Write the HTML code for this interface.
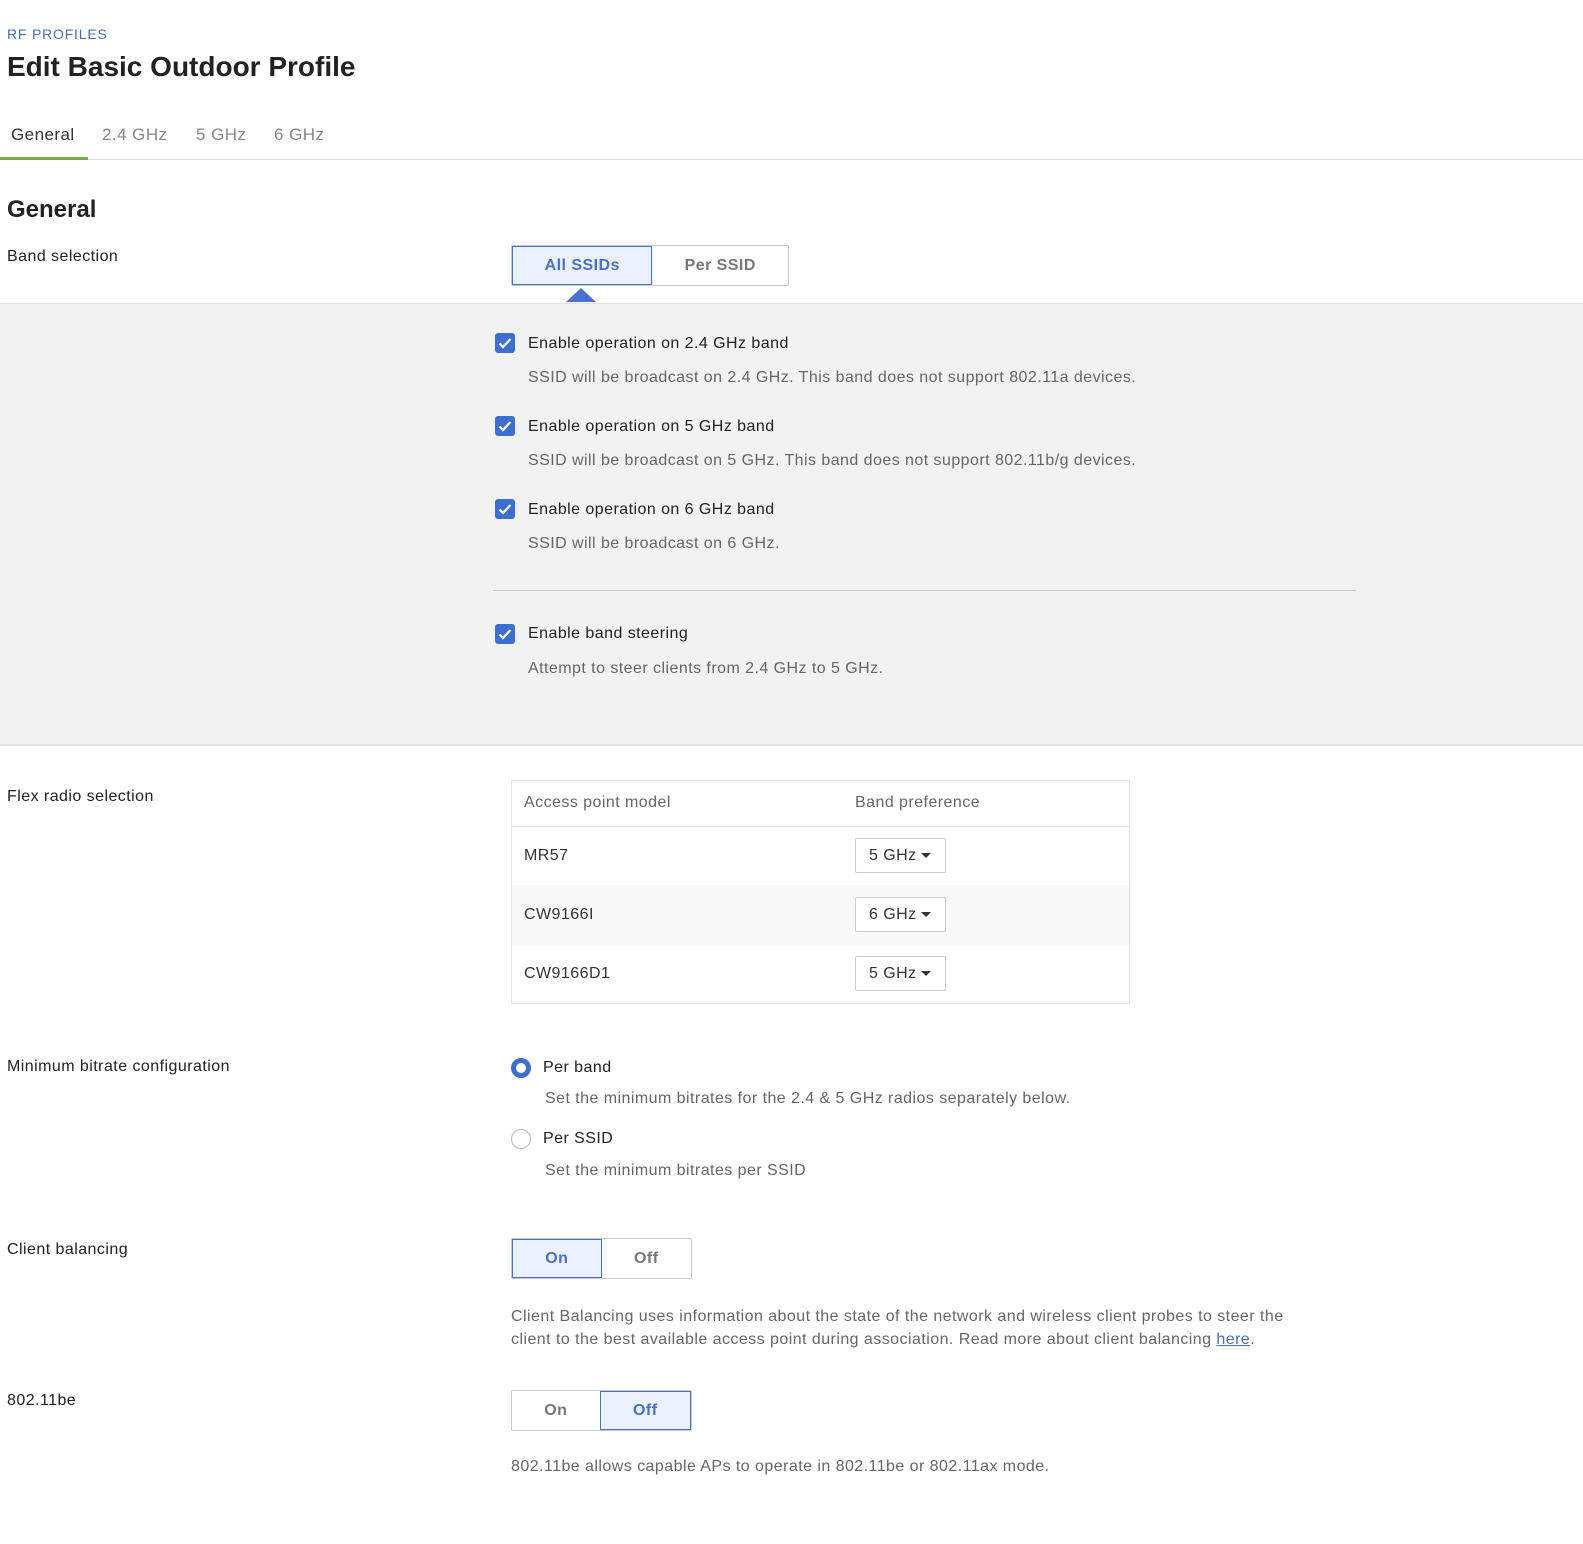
<!DOCTYPE html>
<html><head><meta charset="utf-8"><style>
*{margin:0;padding:0;box-sizing:border-box}
body{width:1583px;height:1544px;background:#fff;font-family:"Liberation Sans",sans-serif;color:#222;position:relative;overflow:hidden;font-size:16px;letter-spacing:.45px}
.a{position:absolute;white-space:nowrap;line-height:20px}
.g{color:#666}
.band{position:absolute;left:0;top:303px;width:1583px;height:443px;background:#f2f2f2;border-top:1px solid #e0e0e0;border-bottom:2px solid #e4e4e4}
.cb{position:absolute;width:20px;height:20px;background:#3c6fcf;border-radius:3px}
.cb svg{position:absolute;left:3px;top:4px}
.seg{position:absolute;display:flex;height:41px;border:1px solid #c8c8c8;border-radius:2px;font-weight:bold;color:#777}
.seg div{display:flex;align-items:center;justify-content:center}
.seg .on{background:#eaf1fd;color:#4a70c8;outline:1px solid #4a70c8;outline-offset:-1px}
.sel{position:absolute;left:855px;width:91px;height:35px;border:1px solid #ccc;border-radius:2px;background:#fff;padding-left:13px;line-height:33px;color:#333}
.sel:after{content:"";position:absolute;right:14px;top:14px;border:5px solid transparent;border-top:5px solid #333;border-bottom:0}
</style></head><body>
<div class="a" style="left:7px;top:24px;font-size:14px;color:#4a6fb0;letter-spacing:.8px">RF PROFILES</div>
<div class="a" style="left:7px;top:50px;font-size:28px;font-weight:bold;line-height:34px;letter-spacing:0">Edit Basic Outdoor Profile</div>
<div class="a" style="left:11px;top:125px;font-size:17px;color:#333">General</div>
<div class="a" style="left:102px;top:125px;font-size:17px;color:#888">2.4 GHz</div>
<div class="a" style="left:196px;top:125px;font-size:17px;color:#888">5 GHz</div>
<div class="a" style="left:274px;top:125px;font-size:17px;color:#888">6 GHz</div>
<div style="position:absolute;left:0;top:159px;width:1583px;height:1px;background:#ddd"></div>
<div style="position:absolute;left:0;top:157px;width:88px;height:3px;background:#78a84a"></div>
<div class="a" style="left:7px;top:196px;font-size:24px;font-weight:bold;line-height:28px;letter-spacing:0">General</div>
<div class="a" style="left:7px;top:247px">Band selection</div>
<div class="seg" style="left:511px;top:245px;width:278px"><div class="on" style="width:141px">All SSIDs</div><div style="width:136px">Per SSID</div></div>
<div class="band"></div>
<div style="position:absolute;left:566px;top:288px;border:15px solid transparent;border-bottom:14px solid #4a70d0;border-top:0"></div>

<div class="cb" style="left:495px;top:333px"><svg width="14" height="12"><path d="M1.5 6.5l3.5 3.5 7.5-8" stroke="#fff" stroke-width="2.2" fill="none"/></svg></div>
<div class="a" style="left:528px;top:334px">Enable operation on 2.4 GHz band</div>
<div class="a g" style="left:528px;top:368px">SSID will be broadcast on 2.4 GHz. This band does not support 802.11a devices.</div>
<div class="cb" style="left:495px;top:416px"><svg width="14" height="12"><path d="M1.5 6.5l3.5 3.5 7.5-8" stroke="#fff" stroke-width="2.2" fill="none"/></svg></div>
<div class="a" style="left:528px;top:417px">Enable operation on 5 GHz band</div>
<div class="a g" style="left:528px;top:451px">SSID will be broadcast on 5 GHz. This band does not support 802.11b/g devices.</div>
<div class="cb" style="left:495px;top:499px"><svg width="14" height="12"><path d="M1.5 6.5l3.5 3.5 7.5-8" stroke="#fff" stroke-width="2.2" fill="none"/></svg></div>
<div class="a" style="left:528px;top:500px">Enable operation on 6 GHz band</div>
<div class="a g" style="left:528px;top:534px">SSID will be broadcast on 6 GHz.</div>
<div style="position:absolute;left:493px;top:590px;width:863px;height:1px;background:#c8c8c8"></div>
<div class="cb" style="left:495px;top:624px"><svg width="14" height="12"><path d="M1.5 6.5l3.5 3.5 7.5-8" stroke="#fff" stroke-width="2.2" fill="none"/></svg></div>
<div class="a" style="left:528px;top:624px">Enable band steering</div>
<div class="a g" style="left:528px;top:659px">Attempt to steer clients from 2.4 GHz to 5 GHz.</div>

<div class="a" style="left:7px;top:787px">Flex radio selection</div>
<div style="position:absolute;left:511px;top:780px;width:619px;height:224px;border:1px solid #e6e6e6"></div>
<div style="position:absolute;left:512px;top:826px;width:617px;height:1px;background:#e6e6e6"></div>
<div style="position:absolute;left:512px;top:885px;width:617px;height:60px;background:#f8f8f8"></div>
<div class="a g" style="left:524px;top:793px">Access point model</div>
<div class="a g" style="left:855px;top:793px">Band preference</div>
<div class="a" style="left:524px;top:846px;color:#333">MR57</div>
<div class="sel" style="top:838px">5 GHz</div>
<div class="a" style="left:524px;top:905px;color:#333">CW9166I</div>
<div class="sel" style="top:897px">6 GHz</div>
<div class="a" style="left:524px;top:964px;color:#333">CW9166D1</div>
<div class="sel" style="top:956px">5 GHz</div>

<div class="a" style="left:7px;top:1057px">Minimum bitrate configuration</div>
<div style="position:absolute;left:511px;top:1058px;width:20px;height:20px;border-radius:50%;border:5px solid #3c6fcf;background:#fff"></div>
<div class="a" style="left:543px;top:1058px">Per band</div>
<div class="a g" style="left:545px;top:1089px">Set the minimum bitrates for the 2.4 &amp; 5 GHz radios separately below.</div>
<div style="position:absolute;left:511px;top:1129px;width:20px;height:20px;border-radius:50%;border:1px solid #bbb;background:#fff"></div>
<div class="a" style="left:543px;top:1129px">Per SSID</div>
<div class="a g" style="left:545px;top:1161px">Set the minimum bitrates per SSID</div>

<div class="a" style="left:7px;top:1240px">Client balancing</div>
<div class="seg" style="left:511px;top:1238px;width:181px"><div class="on" style="width:90px">On</div><div style="width:90px">Off</div></div>
<div class="a g" style="left:511px;top:1305px;line-height:23px">Client Balancing uses information about the state of the network and wireless client probes to steer the<br>client to the best available access point during association. Read more about client balancing <span style="color:#4a6fb0;text-decoration:underline">here</span>.</div>

<div class="a" style="left:7px;top:1391px">802.11be</div>
<div class="seg" style="left:511px;top:1390px;width:181px"><div style="width:88px">On</div><div class="on" style="width:92px">Off</div></div>
<div class="a g" style="left:511px;top:1457px">802.11be allows capable APs to operate in 802.11be or 802.11ax mode.</div>
</body></html>
